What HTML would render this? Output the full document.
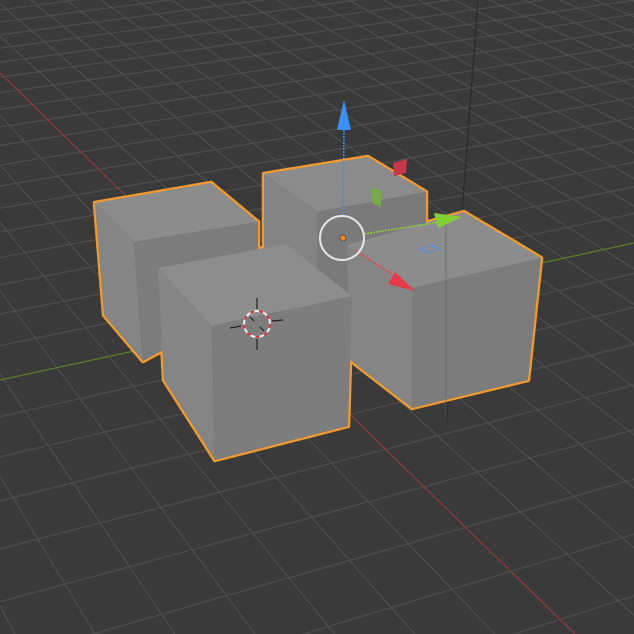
<!DOCTYPE html>
<html><head><meta charset="utf-8"><style>html,body{margin:0;padding:0;background:#3a3a3a;overflow:hidden;width:634px;height:634px}svg{display:block}</style></head>
<body>
<svg id="s" width="634" height="634" viewBox="0 0 634 634" xmlns="http://www.w3.org/2000/svg" overflow="hidden">
<rect width="634" height="634" fill="#3a3a3a"/>
<g id="grid" stroke="#4e4e4e" stroke-width="1.2" fill="none"></g>
<line x1="0" y1="380" x2="634" y2="243" stroke="#5d7a2a" stroke-width="1.3"/>
<line x1="0" y1="73" x2="575" y2="634" stroke="#8a3a44" stroke-width="1.3"/>
<line x1="478" y1="0" x2="446" y2="430" stroke="#2c2c2c" stroke-width="1.3"/>
<g fill="none" stroke="#f39a2e" stroke-width="4.5" stroke-linejoin="round">
<polygon points="95,203 211,183 258,222 258,300 143,361 104,315"/>
<polygon points="264,174 368,157 426,192 426,260 317,330 264,290"/>
<polygon points="347,245 464,212 541,258 528,380 412,408 350,360"/>
<polygon points="158,268 286,244 352,296 348,426 215,460 164,380"/>
</g>
<g stroke="none">
<polygon fill="#858585" points="95,203 134,242 143,361 104,315"/>
<polygon fill="#7c7c7c" points="134,242 258,222 258,300 143,361"/>
<polygon fill="#8c8c8c" points="95,203 211,183 258,222 134,242"/>
<polygon fill="#848484" points="264,174 317,212 317,330 264,290"/>
<polygon fill="#7a7a7a" points="317,212 426,192 426,260 317,330"/>
<polygon fill="#8b8b8b" points="264,174 368,157 426,192 317,212"/>
<polygon fill="#858585" points="347,245 413,288 412,408 350,360"/>
<polygon fill="#7c7c7c" points="413,288 541,258 528,380 412,408"/>
<polygon fill="#8c8c8c" points="347,245 464,212 541,258 413,288"/>
<polygon fill="#858585" points="158,268 212,326 215,460 164,380"/>
<polygon fill="#7d7d7d" points="212,326 352,296 348,426 215,460"/>
<polygon fill="#8d8d8d" points="158,268 286,244 352,296 212,326"/>
</g>
<line x1="446" y1="212" x2="446" y2="430" stroke="#555" stroke-width="1" opacity="0.5"/>
<line x1="343" y1="216" x2="344" y2="128" stroke="#3b8ff0" stroke-width="1.5" stroke-dasharray="2,1"/>
<polygon fill="#3b8ff0" points="344,100 337,130 351,130"/>
<line x1="364" y1="234" x2="440" y2="222" stroke="#8ad43a" stroke-width="1.5" stroke-dasharray="2,1"/>
<polygon fill="#82cf34" points="462,217 434,213 438,228"/>
<line x1="355" y1="250" x2="398" y2="278" stroke="#e8414f" stroke-width="1.5" stroke-dasharray="2,1"/>
<polygon fill="#e63a4b" points="415,291 395,272 388,284"/>
<polygon fill="#c8384a" points="393,163 407,159 406,173 394,176"/>
<polygon fill="#7aa84a" points="372,187 381,191 381,207 372,203"/>
<polygon fill="none" stroke="#3f8fff" stroke-width="1.2" stroke-dasharray="1.5,1" points="420,249 431,245 440,249 430,253"/>
<circle cx="342" cy="238" r="22" fill="none" stroke="#e6e6e6" stroke-width="2"/>
<circle cx="343" cy="238" r="3" fill="#f08a20" stroke="#333" stroke-width="0.6"/>
<circle cx="257" cy="324" r="13" fill="none" stroke="#eee" stroke-width="2"/>
<circle cx="257" cy="324" r="13" fill="none" stroke="#d83040" stroke-width="2" stroke-dasharray="4,5"/>
<g stroke="#222" stroke-width="1.2">
<line x1="257" y1="298" x2="257" y2="309"/><line x1="257" y1="339" x2="257" y2="350"/>
<line x1="230" y1="328" x2="241" y2="326"/><line x1="272" y1="321" x2="283" y2="320"/>
<line x1="250" y1="317" x2="254" y2="321"/><line x1="260" y1="327" x2="264" y2="331"/>
</g>
</svg>
<script>
(function(){
var O=[257,324],Vr=[-587,-500],Vg=[4060,-500],p=0.033,q=0.0125;
function P(u,v){var d=1+u*p+v*q;return [(O[0]+u*p*Vr[0]+v*q*Vg[0])/d,(O[1]+u*p*Vr[1]+v*q*Vg[1])/d,d];}
var g=document.getElementById('grid'),s='';
var U0=-22,U1=26,V0=-40,V1=70;
function clip(x){return Math.max(-50,Math.min(700,x));}
function seg(a,b,c,d){var pts=[],n=60;for(var i=0;i<=n;i++){var t=i/n,u=a+(c-a)*t,v=b+(d-b)*t,r=P(u,v);if(r[2]>0.08&&r[0]>-300&&r[0]<950&&r[1]>-300&&r[1]<950)pts.push(r[0].toFixed(1)+','+r[1].toFixed(1));}
if(pts.length>1)s+='<polyline points="'+pts.join(' ')+'"/>';}
for(var u=U0;u<=U1;u++){if(u==0)continue;seg(u,V0,u,V1);}
for(var v=V0;v<=V1;v++){if(v==0)continue;seg(U0,v,U1,v);}
g.innerHTML=s;
})();
</script>
</body></html>
